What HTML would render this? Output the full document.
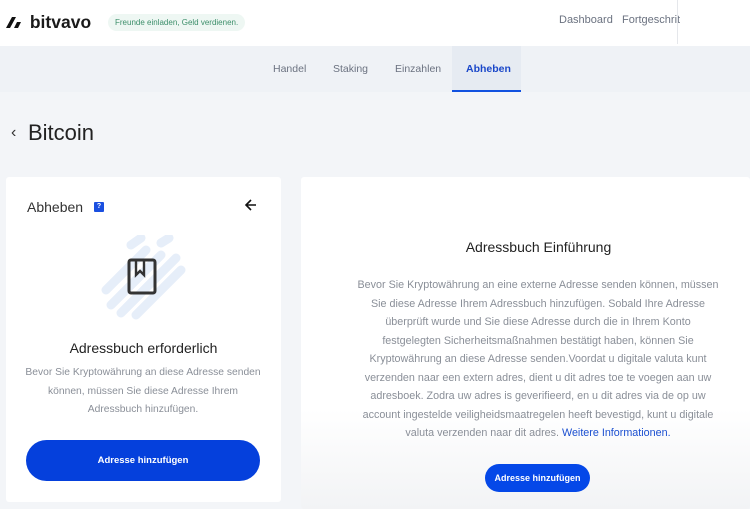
<!DOCTYPE html>
<html><head><meta charset="utf-8"><style>
*{margin:0;padding:0;box-sizing:border-box}
body{width:750px;height:509px;overflow:hidden;background:#f3f5f8;font-family:"Liberation Sans",sans-serif;position:relative}
.hdr{position:absolute;left:0;top:0;width:750px;height:46px;background:#fff}
.logo{position:absolute;left:6px;top:12px;font-size:17.5px;font-weight:bold;color:#1a1a1a}
.pill{position:absolute;left:108px;top:14px;height:17px;padding:0 7px;border-radius:9px;background:#eef7f3;color:#3d8f6b;font-size:8px;line-height:17px}
.tl{position:absolute;top:14px;font-size:11px;color:#6b7280}
.sub{position:absolute;left:0;top:46px;width:750px;height:46px;background:#eff2f6}
.sub span{position:absolute;top:17px;font-size:10.5px;color:#6b7280}
.act{position:absolute;left:452px;top:46px;width:69px;height:46px;background:#e6ebf2;border-bottom:2px solid #1252e0}
h1{position:absolute;left:28px;top:120px;font-size:22px;font-weight:normal;color:#222}
.card{position:absolute;background:#fff;border-radius:3px}
.p{font-size:10px;line-height:18.5px;color:#8a8f98;text-align:center}
.btn{position:absolute;background:#0548e8;color:#fff;font-size:9.5px;font-weight:bold;text-align:center;border-radius:22px}
</style></head><body>
<div class="hdr">
<div class="logo"><svg width="19" height="13" viewBox="0 0 19 13" style="vertical-align:-1px"><path d="M0 12L6 1h4L4 12zM8 12l3-6h4l-3 6z" fill="#111"/></svg> bitvavo</div>
<div class="pill">Freunde einladen, Geld verdienen.</div>
<div class="tl" style="left:559px">Dashboard</div>
<div class="tl" style="left:622px">Fortgeschrit</div>
<div style="position:absolute;left:677px;top:0;width:1px;height:44px;background:#e5e7eb"></div>
</div>
<div class="sub"></div>
<div class="act"></div>
<div class="sub" style="background:none">
<span style="left:273px">Handel</span><span style="left:333px">Staking</span><span style="left:395px">Einzahlen</span><span style="left:466px;color:#1a47c9;font-weight:bold">Abheben</span>
</div>
<div style="position:absolute;left:11px;top:124px;font-size:16px;color:#333">‹</div>
<h1>Bitcoin</h1>

<div class="card" style="left:6px;top:177px;width:275px;height:325px">
<div style="position:absolute;left:21px;top:22px;font-size:14px;color:#333">Abheben</div>
<div style="position:absolute;left:88px;top:25px;width:10px;height:10px;background:#1a4fe0;color:#fff;font-size:7px;font-weight:bold;text-align:center;line-height:10px;border-radius:1px">?</div>
<svg style="position:absolute;left:238px;top:21px" width="14" height="14" viewBox="0 0 14 14"><path d="M12 7H2M7 2L2 7l5 5" stroke="#111" stroke-width="1.6" fill="none"/></svg>
<svg style="position:absolute;left:95px;top:58px" width="90" height="85" viewBox="0 0 90 85"><g stroke="#e6eef9" stroke-width="9" stroke-linecap="round"><path d="M10 70L60 20M20 78L75 23M5 55L45 15M35 80L80 35M30 10L40 3M60 8L68 3"/></g></svg>
<svg style="position:absolute;left:121px;top:81px" width="32" height="38" viewBox="0 0 32 38"><rect x="2" y="2" width="26" height="33" rx="2" fill="none" stroke="#333" stroke-width="3"/><path d="M9 3v14l4-4 4 4V3" fill="none" stroke="#333" stroke-width="2.4"/></svg>
<div style="position:absolute;left:0;width:275px;top:163px;text-align:center;font-size:14px;color:#222">Adressbuch erforderlich</div>
<div class="p" style="position:absolute;left:18px;width:238px;top:187px;font-size:10.3px">Bevor Sie Kryptowährung an diese Adresse senden können, müssen Sie diese Adresse Ihrem Adressbuch hinzufügen.</div>
<div class="btn" style="left:20px;top:263px;width:234px;height:41px;line-height:41px;background:#0540dc">Adresse hinzufügen</div>
</div>

<div class="card" style="left:301px;top:177px;width:449px;height:332px;background:linear-gradient(#fff 70%,#f2f3f5)">
<div style="position:absolute;left:0;width:475px;top:62px;text-align:center;font-size:14px;color:#222">Adressbuch Einführung</div>
<div class="p" style="position:absolute;left:56px;width:362px;top:99px;font-size:10.75px">Bevor Sie Kryptowährung an eine externe Adresse senden können, müssen Sie diese Adresse Ihrem Adressbuch hinzufügen. Sobald Ihre Adresse überprüft wurde und Sie diese Adresse durch die in Ihrem Konto festgelegten Sicherheitsmaßnahmen bestätigt haben, können Sie Kryptowährung an diese Adresse senden.Voordat u digitale valuta kunt verzenden naar een extern adres, dient u dit adres toe te voegen aan uw adresboek. Zodra uw adres is geverifieerd, en u dit adres via de op uw account ingestelde veiligheidsmaatregelen heeft bevestigd, kunt u digitale valuta verzenden naar dit adres. <span style="color:#1a4fd0">Weitere Informationen.</span></div>
<div class="btn" style="left:184px;top:287px;width:105px;height:28px;line-height:28px;font-size:9px">Adresse hinzufügen</div>
</div>
</body></html>
